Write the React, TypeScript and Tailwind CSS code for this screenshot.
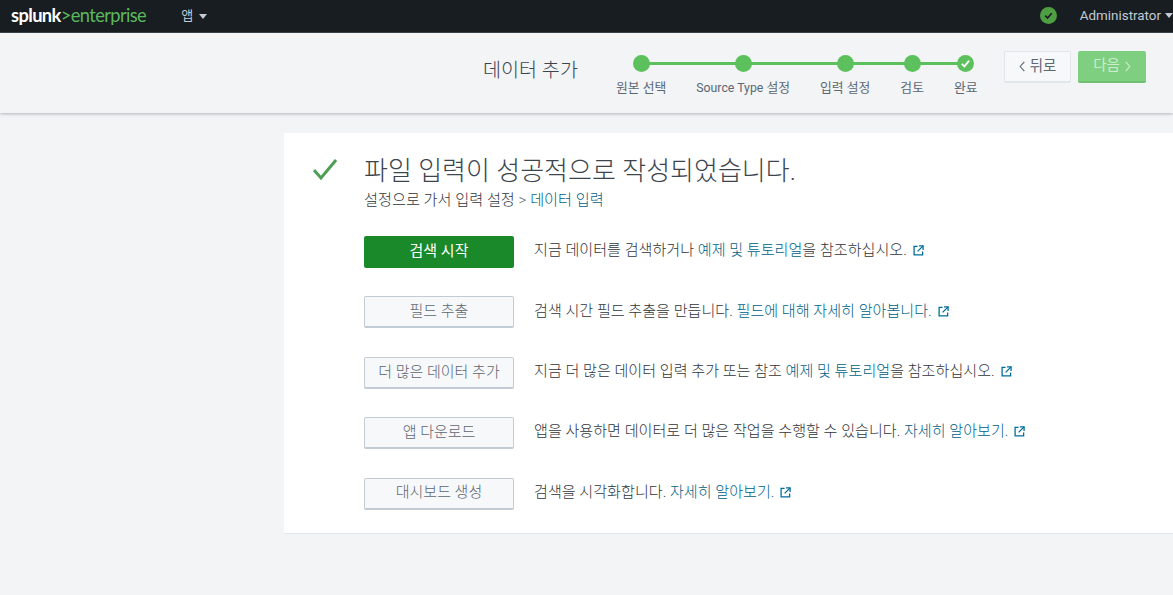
const font = { fontFamily: '"Roboto", "Noto Sans CJK KR", sans-serif' };

function Ext() {
  return (
    <svg viewBox="0 0 12 12" className="inline-block w-[11px] h-[11px] ml-[6px] align-[-1px]" fill="none" stroke="#006d9c" strokeWidth="1.4">
      <path d="M5 1.5H1.2v9.3h9.3V7" />
      <path d="M6.5 1H11v4.5" />
      <path d="M11 1 5 7" />
    </svg>
  );
}

function A({ children }: { children: React.ReactNode }) {
  return <a className="text-[#005f87]">{children}</a>;
}

function Step({ children, done }: { children: React.ReactNode; done?: boolean }) {
  return (
    <div className="relative flex flex-col items-center">
      <div className="relative z-10 w-[17px] h-[17px] rounded-full bg-[#5cc05c] flex items-center justify-center">
        {done && (
          <svg viewBox="0 0 12 12" className="w-[11px] h-[11px]" fill="none" stroke="#fff" strokeWidth="2">
            <path d="M2 6.5 4.8 9.2 10 2.8" />
          </svg>
        )}
      </div>
      <div className="mt-[7px] text-[12.8px] leading-[18px] text-[#5c6773] whitespace-nowrap">{children}</div>
    </div>
  );
}

function Row({ label, children, primary }: { label: string; children: React.ReactNode; primary?: boolean }) {
  return (
    <div className="flex items-center h-[32px] gap-[20px]">
      <button
        className={
          primary
            ? "w-[150px] h-[32px] pb-[1px] rounded-[2px] bg-[#1a8929] text-white text-[15px] font-normal"
            : "w-[150px] h-[32px] pb-[1px] rounded-[2px] bg-[#f7f8fa] border border-[#c3cbd4] border-b-2 text-[#5c6773] text-[15px] font-light"
        }
      >
        {label}
      </button>
      <div className="pb-[3px] text-[15.1px] font-light text-[#2f353b] whitespace-nowrap">{children}</div>
    </div>
  );
}

export default function App() {
  return (
    <div className="h-[595px] overflow-hidden bg-[#f2f4f5]" style={font}>
      <div className="h-[33px] bg-[#171d21] border-b border-[#3c444d] flex items-center pl-[11px] text-[13px]">
        <div className="text-[18.3px] leading-none tracking-[-0.6px] font-['Lato',sans-serif] relative top-[-1px]">
          <span className="text-white font-bold">splunk</span>
          <span className="text-[#5cb85c]">&gt;enterprise</span>
        </div>
        <div className="ml-[35px] flex items-center text-[#c3cbd4]">
          <span>앱</span>
          <span className="ml-[6px] w-0 h-0 border-x-[4px] border-x-transparent border-t-[5px] border-t-[#c3cbd4]"></span>
        </div>
        <div className="ml-auto flex items-center text-[#c3cbd4]">
          <span className="w-[17px] h-[17px] rounded-full bg-[#4f9e44] flex items-center justify-center">
            <svg viewBox="0 0 12 12" className="w-[11px] h-[11px]" fill="none" stroke="#171d21" strokeWidth="1.8">
              <path d="M2.5 6.2 5 8.7 9.5 3.5" />
            </svg>
          </span>
          <span className="ml-[23px] text-[13.4px]">Administrator</span>
          <span className="ml-[4px] w-0 h-0 border-x-[4px] border-x-transparent border-t-[5px] border-t-[#c3cbd4]"></span>
        </div>
      </div>

      <div className="h-[80px] bg-[#f2f4f5] shadow-[0_1px_3px_rgba(60,68,77,0.35)] flex pl-[483px] pt-[22px] relative">
        <div className="text-[19.6px] font-light leading-[30px] mt-[1px] text-[#3c444d] w-[133px] whitespace-nowrap">데이터 추가</div>
        <div className="relative flex gap-[30px] h-[60px] w-[363px]">
          <div className="absolute left-[24px] right-[13px] top-[7px] h-[3px] bg-[#5cc05c]"></div>
          <Step>원본 선택</Step>
          <Step>
            <span className="text-[12.3px]">Source Type</span> 설정
          </Step>
          <Step>입력 설정</Step>
          <Step>검토</Step>
          <Step done>완료</Step>
        </div>
        <div className="ml-[25px] mt-[-4px] flex gap-[7px] h-[32px]">
          <button className="w-[67px] h-[32px] rounded-[2px] bg-[#f7f8fa] border border-[#e1e6eb] border-b-2 text-[14.5px] text-[#5c6773] flex items-center justify-center gap-[4px]">
            <svg viewBox="0 0 7 12" className="w-[7px] h-[11px]" fill="none" stroke="#5c6773" strokeWidth="1.2">
              <path d="M5.5 1 1 6l4.5 5" />
            </svg>
            뒤로
          </button>
          <button className="w-[68px] h-[32px] rounded-[2px] bg-[#7fcf80] border-b-2 border-[#6fbf70] text-[14.5px] text-[#cdeccd] flex items-center justify-center gap-[4px]">
            다음
            <svg viewBox="0 0 7 12" className="w-[7px] h-[11px]" fill="none" stroke="#cdeccd" strokeWidth="1.2">
              <path d="M1.5 1 6 6l-4.5 5" />
            </svg>
          </button>
        </div>
      </div>

      <div className="ml-[284px] mt-[20px] h-[401px] bg-white border-b border-[#e1e6eb] pl-[29px] pt-[22px] flex">
        <svg viewBox="0 0 24 22" className="w-[24px] h-[22px] mt-[4px]" fill="none" stroke="#4f9e55" strokeWidth="3">
          <path d="M1 11 8 19 23 1" />
        </svg>
        <div className="ml-[27px]">
          <h1 className="text-[26px] font-light leading-[32px] text-[#3c444d] whitespace-nowrap">파일 입력이 성공적으로 작성되었습니다.</h1>
          <div className="mt-[3px] text-[15.2px] font-light leading-[20px] text-[#2f353b]">
            설정으로 가서 입력 설정 <span className="text-[#5c6773]">&gt;</span> <A>데이터 입력</A>
          </div>
          <div className="mt-[26px] flex flex-col gap-[28.4px]">
            <Row label="검색 시작" primary>
              지금 데이터를 검색하거나 <A>예제 및 튜토리얼</A>을 참조하십시오.<Ext />
            </Row>
            <Row label="필드 추출">
              검색 시간 필드 추출을 만듭니다. <A>필드에 대해 자세히 알아봅니다.</A><Ext />
            </Row>
            <Row label="더 많은 데이터 추가">
              지금 더 많은 데이터 입력 추가 또는 참조 <A>예제 및 튜토리얼</A>을 참조하십시오.<Ext />
            </Row>
            <Row label="앱 다운로드">
              앱을 사용하면 데이터로 더 많은 작업을 수행할 수 있습니다. <A>자세히 알아보기.</A><Ext />
            </Row>
            <Row label="대시보드 생성">
              검색을 시각화합니다. <A>자세히 알아보기.</A><Ext />
            </Row>
          </div>
        </div>
      </div>
    </div>
  );
}
